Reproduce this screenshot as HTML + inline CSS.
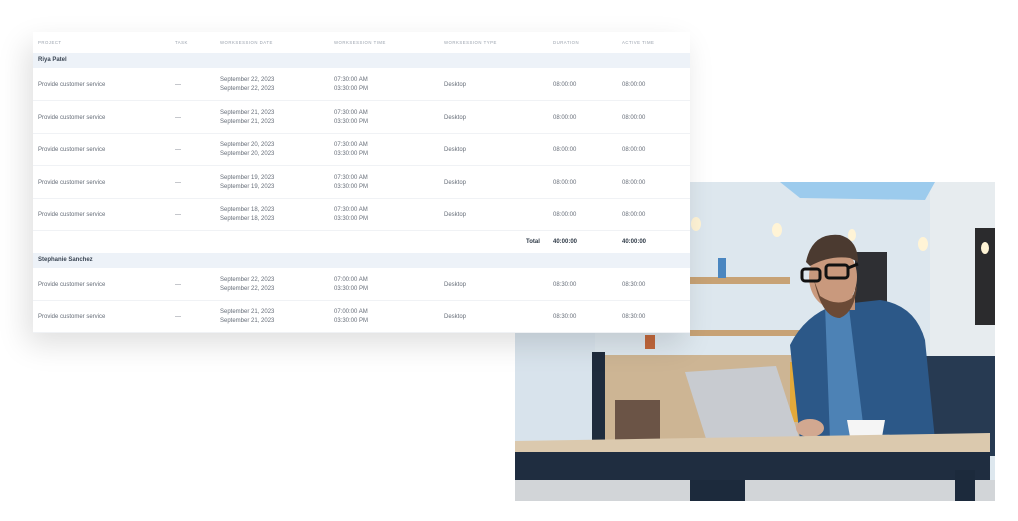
<!DOCTYPE html>
<html><head><meta charset="utf-8"><style>
body{margin:0;width:1018px;height:521px;background:#fff;position:relative;overflow:hidden;font-family:"Liberation Sans",sans-serif;}
#photo{position:absolute;left:515px;top:182px;width:480px;height:319px;}
#tbl{position:absolute;left:33px;top:32px;width:657px;height:300px;background:#fff;box-shadow:-6px 12px 28px rgba(0,0,0,.13);}
.r{position:absolute;left:0;width:657px;border-bottom:1px solid #f0f2f5;}
.t{position:absolute;font-size:6px;color:#666d78;white-space:nowrap;line-height:9px;}
.h{position:absolute;font-size:4.3px;color:#9aa2ad;letter-spacing:.5px;top:8px;}
.g{background:#edf2f8;}
.gn{position:absolute;left:5px;font-size:6px;font-weight:bold;color:#3b4654;top:4px;}
.b{color:#2f3a47;font-weight:bold}
</style></head><body>
<svg id="photo" viewBox="515 182 480 319" xmlns="http://www.w3.org/2000/svg">
<rect x="515" y="182" width="480" height="319" fill="#dde7ee"/>
<rect x="930" y="182" width="65" height="180" fill="#e7ecef"/>
<polygon points="780,182 935,182 925,200 800,198" fill="#9ccbed"/>
<rect x="690" y="277" width="100" height="7" fill="#c7a275"/>
<rect x="690" y="330" width="120" height="6" fill="#c7a275"/>
<rect x="855" y="252" width="32" height="55" fill="#2e2f33"/>
<rect x="975" y="228" width="20" height="97" fill="#2b2b2d"/>
<g fill="#fff4d6"><ellipse cx="696" cy="224" rx="5" ry="7"/><ellipse cx="777" cy="230" rx="5" ry="7"/><ellipse cx="852" cy="235" rx="4" ry="6"/><ellipse cx="923" cy="244" rx="5" ry="7"/><ellipse cx="985" cy="248" rx="4" ry="6"/></g>
<rect x="718" y="258" width="8" height="20" fill="#4a86c0"/>
<rect x="515" y="332" width="80" height="110" fill="#d8e3ec"/>
<rect x="600" y="355" width="200" height="90" fill="#cdb594"/>
<rect x="615" y="400" width="45" height="40" fill="#6b5446"/>
<rect x="592" y="352" width="13" height="92" fill="#1f2c3d"/>
<rect x="645" y="335" width="10" height="14" fill="#c2683c"/>
<rect x="920" y="356" width="75" height="100" fill="#273a52"/>
<rect x="790" y="362" width="12" height="60" fill="#e3a93a"/>
<path d="M800 440 L790 345 Q805 315 835 305 L880 300 Q915 305 925 340 L935 440 Z" fill="#2c5888"/>
<path d="M825 305 L848 300 L865 440 L830 440 Z" fill="#4d82b5"/>
<rect x="835" y="295" width="20" height="15" fill="#c39478"/>
<ellipse cx="833" cy="277" rx="24" ry="31" fill="#c9997d"/>
<path d="M814 280 Q822 318 840 318 Q855 312 857 285 L852 298 Q838 308 820 296 Z" fill="#6b4a36"/>
<path d="M806 262 Q812 232 840 235 Q858 240 858 262 L850 258 Q830 255 810 266 Z" fill="#4b3a30"/>
<g fill="none" stroke="#111" stroke-width="3"><rect x="802" y="269" width="18" height="12" rx="3"/><rect x="826" y="265" width="22" height="13" rx="3"/><line x1="848" y1="268" x2="858" y2="264"/></g>
<polygon points="685,372 776,366 800,440 708,445" fill="#c8cbd0"/>
<ellipse cx="810" cy="428" rx="14" ry="9" fill="#d2a890"/>
<path d="M847 420 L885 420 L882 437 L850 437 Z" fill="#f5f5f5"/>
<ellipse cx="866" cy="441" rx="24" ry="3" fill="#e8e0d6"/>
<polygon points="515,441 990,433 990,453 515,453" fill="#dbc9ae"/>
<rect x="515" y="452" width="475" height="28" fill="#1f2d40"/>
<rect x="515" y="480" width="480" height="21" fill="#d2d5d8"/>
<rect x="955" y="470" width="20" height="31" fill="#1c2a3c"/>
<rect x="690" y="480" width="55" height="21" fill="#1c2a3c"/>
</svg>
<div id="tbl">
<div class="r" style="top:0;height:21px">
<span class="h" style="left:5px">PROJECT</span><span class="h" style="left:142px">TASK</span><span class="h" style="left:187px">WORKSESSION DATE</span><span class="h" style="left:301px">WORKSESSION TIME</span><span class="h" style="left:411px">WORKSESSION TYPE</span><span class="h" style="left:520px">DURATION</span><span class="h" style="left:589px">ACTIVE TIME</span></div>
<div class="r g" style="top:21px;height:15px;border:0"><span class="gn">Riya Patel</span></div>
<div id="rows"></div>
</div>
<script>
var R=document.getElementById('rows'),h='';
function row(y,d,t1,t2,dur){h+='<div class="r" style="top:'+y+'px;height:32px"><span class="t" style="left:5px;top:13px">Provide customer service</span><span class="t" style="left:142px;top:13px">---</span><span class="t" style="left:187px;top:8px">'+d+'<br>'+d+'</span><span class="t" style="left:301px;top:8px">'+t1+'<br>'+t2+'</span><span class="t" style="left:411px;top:13px">Desktop</span><span class="t" style="left:520px;top:13px">'+dur+'</span><span class="t" style="left:589px;top:13px">'+dur+'</span></div>';}
var days=[22,21,20,19,18];
for(var i=0;i<5;i++)row(36+i*32.5,'September '+days[i]+', 2023','07:30:00 AM','03:30:00 PM','08:00:00');
h+='<div class="r" style="top:198px;height:23px"><span class="t b" style="left:493px;top:8px">Total</span><span class="t b" style="left:520px;top:8px">40:00:00</span><span class="t b" style="left:589px;top:8px">40:00:00</span></div>';
h+='<div class="r g" style="top:221px;height:15px;border:0"><span class="gn">Stephanie Sanchez</span></div>';
row(236,'September 22, 2023','07:00:00 AM','03:30:00 PM','08:30:00');
row(268,'September 21, 2023','07:00:00 AM','03:30:00 PM','08:30:00');
R.outerHTML=h;
</script>
</body></html>
